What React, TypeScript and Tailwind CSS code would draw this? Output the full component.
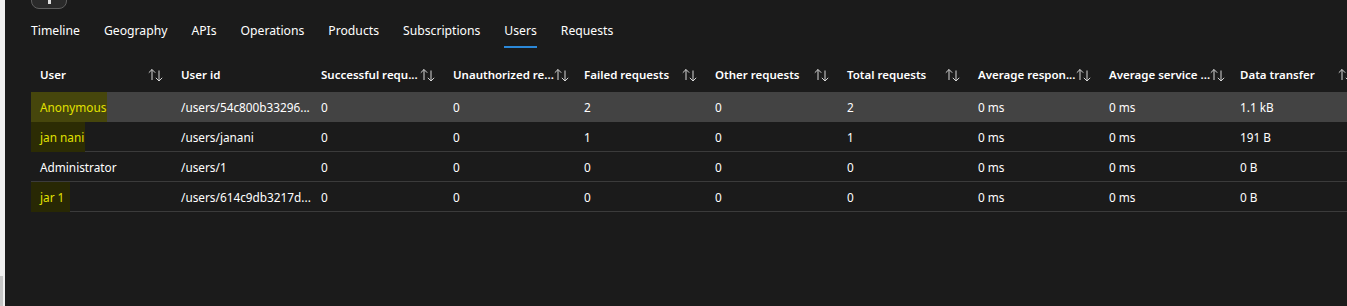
import React from "react";

const TABS = ["Timeline", "Geography", "APIs", "Operations", "Products", "Subscriptions", "Users", "Requests"];

const COLUMNS: { label: string; sort: boolean }[] = [
  { label: "User", sort: true },
  { label: "User id", sort: false },
  { label: "Successful requ...", sort: true },
  { label: "Unauthorized re...", sort: true },
  { label: "Failed requests", sort: true },
  { label: "Other requests", sort: true },
  { label: "Total requests", sort: true },
  { label: "Average respon...", sort: true },
  { label: "Average service ...", sort: true },
  { label: "Data transfer", sort: true },
];

type Row = {
  user: string;
  mark?: string; // highlighter width
  markBg?: string;
  id: string;
  cells: string[];
  selected?: boolean;
};

const ROWS: Row[] = [
  {
    user: "Anonymous",
    mark: "w-[76px]",
    markBg: "bg-[#46460c]",
    id: "/users/54c800b33296...",
    cells: ["0", "0", "2", "0", "2", "0 ms", "0 ms", "1.1 kB"],
    selected: true,
  },
  {
    user: "jan nani",
    mark: "w-[54px]",
    markBg: "bg-[#2c2c04]",
    id: "/users/janani",
    cells: ["0", "0", "1", "0", "1", "0 ms", "0 ms", "191 B"],
  },
  {
    user: "Administrator",
    id: "/users/1",
    cells: ["0", "0", "0", "0", "0", "0 ms", "0 ms", "0 B"],
  },
  {
    user: "jar 1",
    mark: "w-[39px]",
    markBg: "bg-[#282804]",
    id: "/users/614c9db3217d...",
    cells: ["0", "0", "0", "0", "0", "0 ms", "0 ms", "0 B"],
  },
];

const GRID =
  "grid grid-cols-[141px_140px_132px_131px_131px_132px_131px_131px_131px_131px]";

function SortIcon() {
  return (
    <svg width="15" height="14" viewBox="0 0 15 14" fill="none" className="shrink-0 text-[#d6d6d6]">
      <path d="M4 12V1.5M0.8 4.7L4 1.5L7.2 4.7" stroke="currentColor" strokeWidth="1" />
      <path d="M11 2.5V13M7.8 9.8L11 13L14.2 9.8" stroke="currentColor" strokeWidth="1" />
    </svg>
  );
}

export default function App() {
  return (
    <div
      className="flex h-[306px] w-[1347px] overflow-hidden bg-[#1b1b1b] text-white"
      style={{ fontFamily: '"Segoe UI", "Noto Sans", sans-serif' }}
    >
      {/* window edge + scrollbar */}
      <div className="flex w-[5px] shrink-0 flex-col justify-end bg-[#f0f0f0]">
        <div className="h-[30px] w-[3px] bg-[#c6c6c6]" />
      </div>

      <div className="flex min-w-0 flex-1 flex-col pl-[26px]">
        {/* button cut off at the top */}
        <div className="-mt-[19px] flex h-[28px] w-[36px] items-end justify-center rounded-lg border border-[#5e5e5e] bg-[#2a2a2a] pb-[4px]">
          <span className="h-[5px] w-[3px] bg-[#e0e0e0]" />
        </div>

        {/* tabs */}
        <div className="mt-[5px] flex gap-6">
          {TABS.map((t) => (
            <div
              key={t}
              className={`flex h-[34px] items-center border-b-2 pt-[2px] text-[12.2px] ${
                t === "Users" ? "border-[#2b88d8]" : "border-transparent"
              }`}
            >
              {t}
            </div>
          ))}
        </div>

        {/* table */}
        <div className="mt-[13px] w-max">
          <div className={`${GRID} h-[31px] text-[11.5px] font-semibold`}>
            {COLUMNS.map((c) => (
              <div key={c.label} className="flex items-center justify-between pb-[3px] pl-[9px] pr-[9px]">
                <span className="whitespace-nowrap">{c.label}</span>
                {c.sort && <SortIcon />}
              </div>
            ))}
          </div>

          {ROWS.map((r) => (
            <div
              key={r.user}
              className={`${GRID} h-[30px] border-b pt-[2px] text-[11.8px] ${
                r.selected ? "border-[#434343] bg-[#434343]" : "border-[#3b3b3b]"
              }`}
            >
              <div className="flex items-center">
                {r.mark ? (
                  <span
                    className={`-mt-[2px] flex h-[30px] items-center whitespace-nowrap pl-[9px] pt-[2px] text-[#e2e200] ${r.mark} ${r.markBg}`}
                  >
                    {r.user}
                  </span>
                ) : (
                  <span className="whitespace-nowrap pl-[9px]">{r.user}</span>
                )}
              </div>
              <div className="flex items-center whitespace-nowrap pl-[9px]">{r.id}</div>
              {r.cells.map((v, i) => (
                <div key={i} className="flex items-center whitespace-nowrap pl-[9px]">
                  {v}
                </div>
              ))}
            </div>
          ))}
        </div>
      </div>
    </div>
  );
}
